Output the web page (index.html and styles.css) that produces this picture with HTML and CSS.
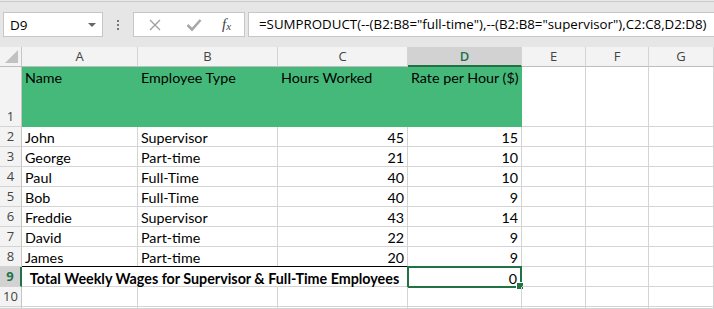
FILE: index.html
```html
<!DOCTYPE html>
<html>
<head>
<meta charset="utf-8">
<link rel="stylesheet" href="styles.css">
</head>
<body>
<div class="toolbar">
  <div class="namebox">
    <span class="nb-text">D9</span>
    <span class="nb-arrow"></span>
  </div>
  <div class="dots"><i></i><i></i><i></i></div>
  <div class="fbtns">
    <svg class="ic-x" width="14" height="14" viewBox="0 0 14 14"><path d="M2 2 L12 12 M12 2 L2 12" stroke="#9e9e9e" stroke-width="1.3" fill="none"/></svg>
    <svg class="ic-ok" width="16" height="14" viewBox="0 0 16 14"><path d="M1.5 7 L6 11.5 L14.5 2" stroke="#a8a8a8" stroke-width="2.6" fill="none"/></svg>
    <span class="fx">f<sub>x</sub></span>
  </div>
  <div class="formula">=SUMPRODUCT(--(B2:B8="full-time"),--(B2:B8="supervisor"),C2:C8,D2:D8)</div>
</div>
<div class="sheet">
  <div class="corner"><span class="tri"></span></div>
  <div class="ch">A</div><div class="ch">B</div><div class="ch">C</div><div class="ch sel">D</div><div class="ch">E</div><div class="ch">F</div><div class="ch">G</div>

  <div class="rh tall">1</div>
  <div class="c g top">Name</div><div class="c g top">Employee Type</div><div class="c g top">Hours Worked</div><div class="c g top">Rate per Hour ($)</div><div class="c"></div><div class="c"></div><div class="c"></div>

  <div class="rh">2</div><div class="c">John</div><div class="c">Supervisor</div><div class="c n">45</div><div class="c n">15</div><div class="c"></div><div class="c"></div><div class="c"></div>
  <div class="rh">3</div><div class="c">George</div><div class="c">Part-time</div><div class="c n">21</div><div class="c n">10</div><div class="c"></div><div class="c"></div><div class="c"></div>
  <div class="rh">4</div><div class="c">Paul</div><div class="c">Full-Time</div><div class="c n">40</div><div class="c n">10</div><div class="c"></div><div class="c"></div><div class="c"></div>
  <div class="rh">5</div><div class="c">Bob</div><div class="c">Full-Time</div><div class="c n">40</div><div class="c n">9</div><div class="c"></div><div class="c"></div><div class="c"></div>
  <div class="rh">6</div><div class="c">Freddie</div><div class="c">Supervisor</div><div class="c n">43</div><div class="c n">14</div><div class="c"></div><div class="c"></div><div class="c"></div>
  <div class="rh">7</div><div class="c">David</div><div class="c">Part-time</div><div class="c n">22</div><div class="c n">9</div><div class="c"></div><div class="c"></div><div class="c"></div>
  <div class="rh">8</div><div class="c">James</div><div class="c">Part-time</div><div class="c n">20</div><div class="c n">9</div><div class="c"></div><div class="c"></div><div class="c"></div>

  <div class="rh selrow">9</div>
  <div class="c total">Total Weekly Wages for Supervisor &amp; Full-Time Employees</div>
  <div class="c n active">0<span class="handle"></span></div><div class="c"></div><div class="c"></div><div class="c"></div>

  <div class="rh">10</div><div class="c"></div><div class="c"></div><div class="c"></div><div class="c"></div><div class="c"></div><div class="c"></div><div class="c"></div>
  <div class="rh"></div><div class="c"></div><div class="c"></div><div class="c"></div><div class="c"></div><div class="c"></div><div class="c"></div><div class="c"></div>
</div>
</body>
</html>
```

FILE: styles.css
```css
* { box-sizing: border-box; }
html, body { margin: 0; padding: 0; }
body {
  width: 714px;
  height: 309px;
  overflow: hidden;
  background: #ffffff;
  font-family: Lato, "Liberation Sans", sans-serif;
}

.toolbar {
  height: 47px;
  display: flex;
  align-items: flex-start;
  padding-top: 12px;
  background: linear-gradient(#e9e9e9 0 1px, #c9c9c9 1px 2px, #e6e6e6 2px);
}

.namebox {
  margin-left: 3px;
  width: 100px;
  height: 25px;
  background: #fff;
  border: 1px solid #c6c6c6;
  display: flex;
  align-items: center;
  justify-content: space-between;
  padding: 0 6px 0 6px;
  font-family: "Open Sans", "Noto Sans", sans-serif;
  font-size: 13.5px;
  color: #000;
}
.nb-arrow {
  width: 0; height: 0;
  border-left: 4px solid transparent;
  border-right: 4px solid transparent;
  border-top: 4px solid #666;
}

.dots {
  width: 30px;
  height: 25px;
  display: flex;
  flex-direction: column;
  align-items: center;
  justify-content: center;
  gap: 2px;
}
.dots i {
  display: block;
  width: 2px;
  height: 2px;
  background: #777;
}

.fbtns {
  width: 112px;
  height: 25px;
  background: #fff;
  border: 1px solid #c6c6c6;
  display: flex;
  align-items: center;
  padding-left: 14px;
}
.ic-x { margin-right: 24px; }
.ic-ok { margin-right: 20px; }
.fx {
  font-family: "Liberation Serif", serif;
  font-style: italic;
  font-size: 15px;
  color: #444;
  line-height: 1;
}
.fx sub { font-size: 11px; vertical-align: -1px; }

.formula {
  margin-left: 3px;
  flex: 1;
  height: 25px;
  background: #fff;
  border: 1px solid #c6c6c6;
  border-right: none;
  padding-left: 10px;
  font-family: "Open Sans", "Noto Sans", sans-serif;
  font-size: 13.3px;
  line-height: 23px;
  color: #000;
  white-space: nowrap;
  overflow: hidden;
}

.sheet {
  display: grid;
  grid-template-columns: 22px 116px 140px 130px 114px 64px 63px 65px;
  grid-template-rows: 20px 60px repeat(9, 20px) 2px;
  overflow: hidden;
}

.corner {
  position: relative;
  background: #f3f3f3;
  border-right: 1px solid #c6c6c6;
  border-bottom: 1px solid #bdbdbd;
}
.tri {
  position: absolute;
  right: 3px;
  bottom: 3px;
  width: 0; height: 0;
  border-left: 13px solid transparent;
  border-bottom: 13px solid #c1c1c1;
}

.ch {
  background: #f3f3f3;
  border-right: 1px solid #d4d4d4;
  border-bottom: 1px solid #bdbdbd;
  font-family: "Open Sans", "Noto Sans", sans-serif;
  font-size: 13px;
  color: #444;
  display: flex;
  align-items: center;
  justify-content: center;
  line-height: 1;
}
.ch.sel {
  background: #d2d2d2;
  color: #217346;
  font-weight: 600;
  border-bottom: 2px solid #217346;
}

.rh {
  background: #f3f3f3;
  border-right: 1px solid #c6c6c6;
  border-bottom: 1px solid #d4d4d4;
  font-family: "Open Sans", "Noto Sans", sans-serif;
  font-size: 13px;
  color: #444;
  display: flex;
  align-items: center;
  justify-content: center;
  line-height: 1;
  overflow: hidden;
}
.rh.tall { align-items: flex-end; padding-bottom: 3px; }
.rh.selrow {
  background: #d2d2d2;
  color: #217346;
  font-weight: 700;
  border-right: 2px solid #217346;
}

.c {
  position: relative;
  border-right: 1px solid #d4d4d4;
  border-bottom: 1px solid #d4d4d4;
  font-size: 14.3px;
  line-height: 19px;
  padding: 1px 3px 0;
  color: #000;
  white-space: nowrap;
}
.c.n { text-align: right; }
.c.g {
  background: #45b97a;
  border-color: #45b97a;
}
.c.top { padding-top: 1px; }

.c.total {
  grid-column: span 3;
  text-align: center;
  font-weight: 700;
  border-top: 1px solid #000;
  margin-top: -1px;
  line-height: 19px;
  padding-top: 2px;
}
.c.active {
  border: 2px solid #217346;
  margin: -1px 0 -1px -1px;
  line-height: 18px;
  padding-top: 2px;
}
.handle {
  position: absolute;
  right: -4px;
  bottom: -4px;
  width: 6px;
  height: 6px;
  background: #217346;
  border: 1px solid #fff;
  box-sizing: content-box;
}
```
